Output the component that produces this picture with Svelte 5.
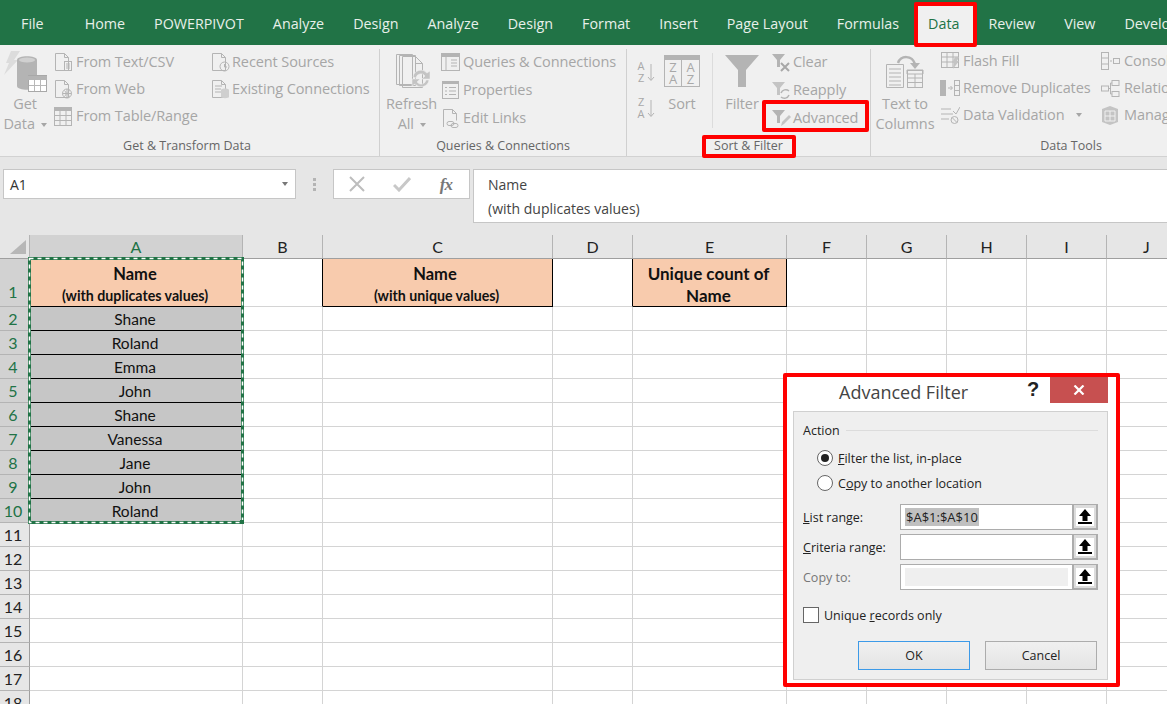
<script>
	const tabs = ['Home', 'POWERPIVOT', 'Analyze', 'Design', 'Analyze', 'Design', 'Format', 'Insert', 'Page Layout', 'Formulas', 'Data', 'Review', 'View', 'Developer'];
	const cols = ['A', 'B', 'C', 'D', 'E', 'F', 'G', 'H', 'I', 'J'];
	const names = ['Shane', 'Roland', 'Emma', 'John', 'Shane', 'Vanessa', 'Jane', 'John', 'Roland'];
	const rows = Array.from({ length: 17 }, (_, i) => i + 2);
</script>

<div class="page">
	<div class="tabs">
		<span class="tab file">File</span>
		{#each tabs as tab}
			<span class="tab" class:active={tab === 'Data'}>{tab}</span>
		{/each}
	</div>

	<div class="ribbon">
		<section class="group g1">
			<div class="body">
				<div class="big w50">
					<svg class="top2" width="46" height="42" viewBox="0 0 46 42">
						<polygon points="9,0 18,0 12,9 16,9 2,24 7,12 4,12" fill="#dcdcdc" />
						<path d="M15 9c0-5 20-5 20 0v26c0 5-20 5-20 0z" fill="#b4b4b4" />
						<ellipse cx="25" cy="9" rx="8" ry="2.5" fill="#d0d0d0" />
						<rect x="26.5" y="24.500" width="18" height="16" fill="#fff" stroke="#a8a8a8" />
						<path d="M26 25h19v4H26z" fill="#b4b4b4" />
						<path d="M32.500 29v11M38.500 29v11M27 34.500h17" stroke="#b8b8b8" fill="none" />
					</svg>
					<span class="big-label">Get<br />Data <i class="caret"></i></span>
				</div>
				<div class="col r27 w158">
					<div class="item"><svg class="ico" width="20" height="20" viewBox="0 0 20 20"><path d="M2.500 1.500h9l4 4v13h-13zM11.500 1.500v4h4" class="ln" /><rect x="11.500" y="9.500" width="7" height="9" fill="#f0f0f0" class="ln" /><path d="M13 12h4M13 14h4M13 16h4" class="ln" /></svg>From Text/CSV</div>
					<div class="item"><svg class="ico" width="20" height="20" viewBox="0 0 20 20"><path d="M2.500 1.500h9l4 4v13h-13zM11.500 1.500v4h4" class="ln" /><circle cx="14" cy="14.500" r="4.500" class="ln" /><path d="M9.500 14.500h9M14 10v9M11.500 11.500c2 2 2 4 0 6M16.500 11.500c-2 2-2 4 0 6" class="ln" /></svg>From Web</div>
					<div class="item"><svg class="ico" width="20" height="20" viewBox="0 0 20 20"><rect x="1.500" y="1.500" width="17" height="18" class="ln" /><path d="M1 1h18v4H1z" fill="#b4b4b4" /><path d="M7 5v14M13 5v14M1.500 9.500h17M1.500 14.500h17" class="ln" /></svg>From Table/Range</div>
				</div>
				<div class="col r27">
					<div class="item tight"><svg class="ico" width="20" height="20" viewBox="0 0 20 20"><path d="M1.500 1.500h9l4 4v13h-13zM10.500 1.500v4h4" class="ln" /><circle cx="13.500" cy="14.500" r="4.500" class="ln" /><path d="M13.500 12v3h2.500" class="ln" /></svg>Recent Sources</div>
					<div class="item tight"><svg class="ico" width="20" height="20" viewBox="0 0 20 20"><path d="M1.500 1.500h9l4 4v13h-13zM10.500 1.500v4h4M4 7h7M4 10h6M4 13h6" class="ln" /><path d="M10 11c0-2 8-2 8 0v7c0 1.500-8 1.500-8 0z" fill="#cfcfcf" /></svg>Existing Connections</div>
				</div>
			</div>
			<div class="label">Get &amp; Transform Data</div>
		</section>

		<section class="group g2">
			<div class="body">
				<div class="big w50">
					<svg class="top4" width="40" height="38" viewBox="0 4 40 38">
						<path d="M4.500 5.500h16v30h-16zM7.500 6.500h16v30h-16zM10.500 7.500h13l7 7v24h-20zM23.500 7.500v7h7" class="ln" />
						<path d="M21 28a8 8 0 0 1 14-4l3-2v8h-8l3-3a5 5 0 0 0-9 2zM37 31a8 8 0 0 1-14 4l-3 2v-7h8l-3 3a5 5 0 0 0 9-2z" fill="#c4c4c4" stroke="#f0f0f0" stroke-width="0.5" />
					</svg>
					<span class="big-label">Refresh<br />All <i class="caret"></i></span>
				</div>
				<div class="col r28">
					<div class="item"><svg class="ico" width="20" height="20" viewBox="0 0 20 20"><rect x="1.500" y="1.500" width="18" height="17" class="ln" /><path d="M1 1h19v4H1z" fill="#b4b4b4" /><path d="M6 5v13M11 8h6M11 11h6M11 14h6" class="ln" /></svg>Queries &amp; Connections</div>
					<div class="item"><svg class="ico" width="20" height="20" viewBox="0 0 20 20"><rect x="2.500" y="1.500" width="16" height="17" class="ln" /><path d="M2 1h17v3H2z" fill="#b4b4b4" /><path d="M9 7.500h7M9 11h7M9 14.500h7M5 7.500h2M5 11h2M5 14.500h2" class="ln" /></svg>Properties</div>
					<div class="item"><svg class="ico" width="20" height="20" viewBox="0 0 20 20"><path d="M3.500 19v-17.500h9l4 4v7M12.500 1.500v4h4" class="ln" /><rect x="7" y="13.500" width="7" height="4" rx="2" class="ln" /><rect x="11" y="15.500" width="7" height="4" rx="2" class="ln" /></svg>Edit Links</div>
				</div>
			</div>
			<div class="label">Queries &amp; Connections</div>
		</section>

		<section class="group g3">
			<div class="body">
				<div class="az-col">
					<svg width="20" height="24" viewBox="0 0 20 24">
						<text x="6" y="10" class="az">A</text><text x="6" y="22" class="az">Z</text>
						<path d="M16 4v16M13 17l3 3.500 3-3.500" class="ln" />
					</svg>
					<svg width="20" height="24" viewBox="0 0 20 24">
						<text x="6" y="10" class="az">Z</text><text x="6" y="22" class="az">A</text>
						<path d="M16 4v16M13 17l3 3.500 3-3.500" class="ln" />
					</svg>
				</div>
				<div class="big sort">
					<svg class="top6" width="36" height="32" viewBox="0 0 36 32">
						<rect x="0.500" y="0.500" width="35" height="31" fill="#f0f0f0" stroke="#b4b4b4" />
						<rect x="0" y="0" width="36" height="5" fill="#b4b4b4" />
						<path d="M17.500 5v26" class="ln" />
						<text x="9" y="17" class="az big-az">Z</text><text x="9" y="29" class="az big-az">A</text>
						<text x="26.500" y="17" class="az big-az">A</text><text x="26.500" y="29" class="az big-az">Z</text>
					</svg>
					<span class="big-label">Sort</span>
				</div>
				<div class="vsep"></div>
				<div class="big filter">
					<svg class="top6" width="34" height="32" viewBox="0 0 34 32">
						<polygon points="0,0 34,0 21,15 21,32 13,32 13,15" fill="#b4b4b4" />
					</svg>
					<span class="big-label">Filter</span>
				</div>
				<div class="col r28">
					<div class="item"><svg class="ico" width="20" height="20" viewBox="0 0 20 20"><polygon points="1,2 14,2 9,8 9,15 6,15 6,8" fill="#b4b4b4" /><path d="M10 11l8 8M18 11l-8 8" stroke="#a8a8a8" stroke-width="2" /></svg>Clear</div>
					<div class="item"><svg class="ico" width="20" height="20" viewBox="0 0 20 20"><polygon points="1,2 14,2 9,8 9,15 6,15 6,8" fill="#c4c4c4" /><path d="M10 13a5 5 0 0 1 8-2M18 15a5 5 0 0 1-8 2" stroke="#b4b4b4" stroke-width="1.500" fill="none" /></svg>Reapply</div>
					<div class="item"><svg class="ico" width="20" height="20" viewBox="0 0 20 20"><polygon points="1,2 14,2 9,8 9,15 6,15 6,8" fill="#b4b4b4" /><path d="M10 18l1-4 7-7 2 2-7 7z" fill="#c4c4c4" /></svg>Advanced</div>
				</div>
			</div>
			<div class="label">Sort &amp; Filter</div>
		</section>

		<section class="group g4">
			<div class="body">
				<div class="big w60">
					<svg class="top6" width="38" height="34" viewBox="0 0 38 34">
						<path d="M0.500 9.500h17v23h-17zM3 14h12M3 18h12M3 22h12M3 26h12M3 30h12" class="ln" />
						<rect x="21.500" y="15.500" width="15" height="17" class="ln" />
						<path d="M21 15h16v4H21zM29 19v13M22 23h14M22 27.500h14" class="ln" />
						<path d="M12 8c3-8 14-8 17 1" stroke="#b4b4b4" stroke-width="2.500" fill="none" />
						<polygon points="24,8 34,8 29,14" fill="#b4b4b4" />
					</svg>
					<span class="big-label">Text to<br />Columns</span>
				</div>
				<div class="col r27 w160">
					<div class="item"><svg class="ico" width="20" height="20" viewBox="0 0 20 20"><rect x="1.500" y="1.500" width="17" height="15" class="ln" /><path d="M1.500 6h17M1.500 11h17M7 1.500v15M13 1.500v15" class="ln" /><polygon points="15,6 19,6 17,10 19,10 13,18 14,12 12,12" fill="#c4c4c4" /></svg>Flash Fill</div>
					<div class="item"><svg class="ico" width="20" height="20" viewBox="0 0 20 20"><rect x="0" y="2" width="6" height="16" fill="#b4b4b4" /><rect x="14.500" y="2.500" width="5" height="15" class="ln" /><path d="M14.500 7.500h5M14.500 12.500h5" class="ln" /><path d="M8 10h4M10.500 8l2 2-2 2" class="ln" /></svg>Remove Duplicates</div>
					<div class="item"><svg class="ico" width="20" height="20" viewBox="0 0 20 20"><path d="M1 4h10M1 9h12M1 14h8" class="ln" /><path d="M13 6l3 3 4-7" class="ln" /><circle cx="14.500" cy="15" r="3.500" class="ln" /><path d="M12 12.500l5 5" class="ln" /></svg>Data Validation <i class="caret far"></i></div>
				</div>
				<div class="col r27">
					<div class="item tight"><svg class="ico" width="20" height="20" viewBox="0 0 20 20"><rect x="1.500" y="1.500" width="7" height="17" class="ln" /><path d="M1.500 7h7M1.500 13h7M10 10h2" class="ln" /><rect x="13.500" y="7.500" width="6" height="5" class="ln" /></svg>Consolidate</div>
					<div class="item tight"><svg class="ico" width="20" height="20" viewBox="0 0 20 20"><rect x="1.500" y="8" width="7" height="5" class="ln" /><rect x="12" y="2.500" width="7" height="5" class="ln" /><rect x="12" y="13.500" width="7" height="5" class="ln" /><path d="M8.500 10.500h2M10.500 5v11h1.500M10.500 5h1.500" class="ln" /></svg>Relationships</div>
					<div class="item tight"><svg class="ico" width="20" height="20" viewBox="0 0 20 20"><path d="M2 4l8-3 8 3v13l-8 3-8-3z" fill="#c4c4c4" /><path d="M5 6h10v10H5zM10 6v10M5 11h10" stroke="#f0f0f0" fill="none" /></svg>Manage Data Model</div>
				</div>
			</div>
			<div class="label">Data Tools</div>
		</section>
	</div>

	<div class="formula">
		<div class="namebox"><span>A1</span><i class="caret dark"></i></div>
		<div class="dots"><b></b><b></b><b></b></div>
		<div class="fxbtns">
			<svg width="16" height="16" viewBox="0 0 16 16"><path d="M1 1l14 14M15 1L1 15" stroke="#bdbdbd" stroke-width="2" /></svg>
			<svg width="18" height="16" viewBox="0 0 18 16"><path d="M1 9l5 5L17 2" stroke="#c8c8c8" stroke-width="3" fill="none" /></svg>
			<span class="fx">fx</span>
		</div>
		<div class="fxinput">Name<br />(with duplicates values)</div>
	</div>

	<div class="sheet">
		<div class="corner"><i></i></div>
		{#each cols as c}
			<div class="colhead" class:sel={c === 'A'}>{c}</div>
		{/each}

		<div class="rowhead tall sel">1</div>
		<div class="cell tall hd hb"><b>Name</b><small>(with duplicates values)</small></div>
		<div class="cell tall br"></div>
		<div class="cell tall hd hb br"><b class="nudge">Name</b><small>(with unique values)</small></div>
		<div class="cell tall br"></div>
		<div class="cell tall hd hb br wide"><b>Unique count of</b><b>Name</b></div>
		{#each [0, 1, 2, 3, 4] as _}<div class="cell tall"></div>{/each}

		{#each rows as r, i}
			<div class="rowhead" class:sel={r <= 10}>{r}</div>
			{#if names[i]}
				<div class="cell val">{names[i]}</div>
			{:else}
				<div class="cell"></div>
			{/if}
			{#each [0, 1, 2, 3, 4, 5, 6, 7, 8] as _}<div class="cell"></div>{/each}
		{/each}
	</div>

	<!-- copy marquee round A1:A10 -->
	<svg class="ants" width="216" height="267" viewBox="0 0 216 267">
		<rect x="1.500" y="1.500" width="213" height="264" fill="none" stroke="#217346" stroke-width="3" />
		<rect x="1.500" y="1.500" width="213" height="264" fill="none" stroke="#fff" stroke-width="1.500" stroke-dasharray="4 4" />
		<rect x="212" y="263" width="4" height="4" fill="#217346" />
	</svg>

	<!-- red annotation boxes -->
	<div class="mark m-adv"></div>
	<div class="mark m-sf"></div>

	<div class="dialog">
		<div class="titlebar">
			<span class="title">Advanced Filter</span>
			<span class="help">?</span>
			<span class="close">
				<svg width="12" height="10" viewBox="0 0 12 10"><path d="M1.500 0.500l9 9M10.500 0.500l-9 9" stroke="#fff" stroke-width="2.200" /></svg>
			</span>
		</div>
		<div class="panel">
			<div class="legend"><span>Action</span><i></i></div>
			<label class="radio first"><i class="dot on"></i><span><u>F</u>ilter the list, in-place</span></label>
			<label class="radio"><i class="dot"></i><span>C<u>o</u>py to another location</span></label>

			<div class="field first">
				<span class="flabel"><u>L</u>ist range:</span>
				<div class="input"><span class="selected">$A$1:$A$10</span></div>
				<div class="pick"><span><svg width="14" height="15" viewBox="0 0 14 15"><path d="M7 0l6 7H9.500v5h-5V7H1zM0 13h14v2H0z" fill="#000" /></svg></span></div>
			</div>
			<div class="field">
				<span class="flabel"><u>C</u>riteria range:</span>
				<div class="input"></div>
				<div class="pick"><span><svg width="14" height="15" viewBox="0 0 14 15"><path d="M7 0l6 7H9.500v5h-5V7H1zM0 13h14v2H0z" fill="#000" /></svg></span></div>
			</div>
			<div class="field">
				<span class="flabel off">Copy to:</span>
				<div class="input dis"><i></i></div>
				<div class="pick"><span><svg width="14" height="15" viewBox="0 0 14 15"><path d="M7 0l6 7H9.500v5h-5V7H1zM0 13h14v2H0z" fill="#000" /></svg></span></div>
			</div>

			<label class="check"><i></i><span>Unique <u>r</u>ecords only</span></label>

			<div class="buttons">
				<button class="primary">OK</button>
				<button>Cancel</button>
			</div>
		</div>
	</div>
</div>

<style>
	:global(body) {
		margin: 0;
		background: #fff;
	}

	.page {
		position: relative;
		width: 1167px;
		height: 704px;
		overflow: hidden;
		font-family: 'Open Sans', 'Liberation Sans', sans-serif;
		font-size: 14px;
		color: #444;
	}

	/* tabs */
	.tabs {
		position: relative;
		z-index: 1;
		height: 45px;
		background: #217346;
		display: flex;
		align-items: center;
		gap: 29px;
		padding-left: 21px;
		white-space: nowrap;
		color: #e8f0ea;
		font-size: 14.300px;
		box-sizing: border-box;
	}
	.tab.file {
		margin-right: 12px;
	}
	.tab {
		position: relative;
		top: 1px;
		flex: none;
	}
	.tab.active {
		color: #217346;
	}
	/* the Data tab with its red annotation box */
	.tab.active::before {
		content: '';
		position: absolute;
		z-index: -1;
		left: -14px;
		right: -18px;
		top: -12px;
		height: 45px;
		box-sizing: border-box;
		background: #f0f0f0;
		border: 4px solid #f00;
		border-radius: 2px;
	}

	/* ribbon */
	.ribbon {
		height: 112px;
		box-sizing: border-box;
		background: #f0f0f0;
		border-bottom: 1px solid #d2d2d2;
		display: flex;
		white-space: nowrap;
		color: #a6a6a6;
		font-size: 14.500px;
		letter-spacing: -0.1px;
	}
	.group {
		display: flex;
		flex-direction: column;
		height: 107px;
		margin-top: 4px;
		box-sizing: border-box;
		border-right: 1px solid #d0d0d0;
	}
	.g1 { width: 380px; }
	.g2 { width: 247px; padding-left: 6px; }
	.g3 { width: 244px; padding-left: 8px; }
	.g4 { flex: 1; border-right: 0; padding-left: 6px; min-width: 0; overflow: hidden; }
	.body {
		flex: 1;
		display: flex;
		min-height: 0;
	}
	.body > * {
		flex: none;
	}
	.label {
		height: 21px;
		line-height: 22px;
		text-align: center;
		font-size: 12.500px;
		color: #666;
		letter-spacing: 0;
	}
	.g1 .label { padding-right: 5px; }
	.g2 .label { margin-left: -6px; }
	.g3 .label { margin-left: -8px; }
	.g4 .label { margin-left: -6px; padding-left: 104px; }
	.big {
		display: grid;
		grid-template-rows: 45px auto;
		justify-items: center;
	}
	.top2 { margin-top: 2px; }
	.top4 { margin-top: 4px; }
	.top6 { margin-top: 6px; }
	.big-label {
		text-align: center;
		line-height: 20px;
	}
	.w50 { width: 50px; margin-right: 3px; }
	.w60 { width: 60px; margin-left: -2px; margin-right: 5px; }
	.w158 { width: 158px; }
	.w160 { width: 160px; }
	.col {
		display: flex;
		flex-direction: column;
		padding-top: 3px;
	}
	.g2 .col { margin-left: 1px; }
	.g4 .col { padding-top: 2px; }
	.r27 { gap: 7px; }
	.r28 { gap: 8px; }
	.item {
		height: 20px;
		line-height: 20px;
		display: flex;
		align-items: center;
	}
	.ico {
		flex: none;
		margin-right: 3px;
	}
	.item.tight .ico {
		margin-right: 1px;
	}
	.g4 .item.tight .ico {
		margin-right: 4px;
	}
	.g3 .item .ico { margin-right: 2px; }
	.ln {
		fill: none;
		stroke: #b4b4b4;
		stroke-width: 1;
	}
	.caret {
		display: inline-block;
		width: 0;
		height: 0;
		border: 3.500px solid transparent;
		border-top: 4px solid #a6a6a6;
		border-bottom: 0;
		vertical-align: middle;
		margin-left: 2px;
	}
	.caret.far { margin-left: 12px; }
	.az-col {
		width: 29px;
		display: flex;
		flex-direction: column;
		gap: 12px;
		padding-top: 11px;
	}
	.az {
		font-size: 11px;
		fill: #a8a8a8;
		text-anchor: middle;
	}
	.big-az {
		font-size: 13px;
	}
	.big.sort { width: 36px; }
	.big.filter { width: 34px; margin-right: 12px; }
	.vsep {
		width: 1px;
		height: 75px;
		margin: 4px 12px 0 12px;
		background: #dcdcdc;
	}

	/* formula bar */
	.formula {
		height: 78px;
		background: #e6e6e6;
		display: flex;
		align-items: flex-start;
		padding: 12px 0 0 3px;
		box-sizing: border-box;
		font-size: 14px;
	}
	.namebox {
		width: 293px;
		height: 30px;
		box-sizing: border-box;
		background: #fff;
		border: 1px solid #c6c6c6;
		display: flex;
		align-items: center;
		justify-content: space-between;
		padding: 0 7px 0 6px;
		color: #333;
	}
	.caret.dark { border-width: 4px 3.500px 0; border-top-color: #777; }
	.dots {
		width: 37px;
		height: 30px;
		display: flex;
		flex-direction: column;
		align-items: center;
		justify-content: center;
		gap: 2px;
	}
	.dots b {
		width: 3px;
		height: 3px;
		background: #b4b4b4;
	}
	.fxbtns {
		width: 137px;
		height: 30px;
		box-sizing: border-box;
		background: #fff;
		border: 1px solid #c6c6c6;
		display: flex;
		align-items: center;
		justify-content: space-between;
		padding: 0 17px 0 15px;
	}
	.fx {
		font-family: 'Liberation Serif', serif;
		font-style: italic;
		font-weight: bold;
		font-size: 17px;
		color: #777;
		line-height: 1;
		letter-spacing: -1px;
	}
	.fxinput {
		flex: 1;
		margin-left: 3px;
		height: 54px;
		box-sizing: border-box;
		background: #fff;
		border: 1px solid #c6c6c6;
		border-right: 0;
		padding: 3px 0 0 14px;
		line-height: 24px;
		color: #444;
	}

	/* sheet */
	.sheet {
		display: grid;
		grid-template-columns: 30px 213px 80px 230px 80px 154px 80px 80px 80px 80px 80px;
		grid-auto-rows: 24px;
		font-family: Lato, 'Liberation Sans', sans-serif;
		font-size: 15.500px;
		color: #111;
	}
	.corner {
		background: #e6e6e6;
		border-right: 1px solid #b4b4b4;
		border-bottom: 1px solid #9f9f9f;
		position: relative;
	}
	.corner i {
		position: absolute;
		left: 10px;
		top: 5px;
		width: 0;
		height: 0;
		border-left: 16px solid transparent;
		border-bottom: 14px solid #b7b7b7;
	}
	.colhead {
		background: #e6e6e6;
		border-right: 1px solid #b4b4b4;
		border-bottom: 1px solid #9f9f9f;
		text-align: center;
		line-height: 24px;
		font-size: 16px;
		color: #222;
	}
	.colhead.sel {
		background: #d2d2d2;
		color: #217346;
	}
	.rowhead {
		background: #e6e6e6;
		border-right: 1px solid #9f9f9f;
		border-bottom: 1px solid #b4b4b4;
		padding-right: 3px;
		text-align: center;
		line-height: 24px;
		font-size: 16px;
		color: #222;
	}
	.rowhead.sel {
		background: #d2d2d2;
		color: #217346;
	}
	.rowhead.tall {
		grid-row: span 2;
		line-height: 30px;
		padding-top: 18px;
		height: 48px;
		box-sizing: border-box;
	}
	.cell {
		box-sizing: border-box;
		border-right: 1px solid #d4d4d4;
		border-bottom: 1px solid #d4d4d4;
		text-align: center;
		line-height: 25px;
		padding-right: 2px;
	}
	.cell.tall {
		height: 48px;
		grid-row: span 2;
	}
	.cell.br {
		border-right-color: #000;
	}
	.cell.hd {
		background: #f8cbad;
		display: flex;
		flex-direction: column;
		align-items: center;
		line-height: 22px;
		padding-top: 4px;
	}
	.cell.hb {
		border-bottom-color: #000;
	}
	.cell.hd b {
		font-size: 16.500px;
	}
	.cell.hd b.nudge {
		margin-left: -3px;
	}
	.cell.hd.wide {
		padding-right: 2px;
	}
	.cell.hd.wide b {
		font-size: 17px;
	}
	.cell.hd small {
		font-size: 14.200px;
		font-weight: bold;
	}
	.cell.val {
		background: #c6c6c6;
		border-bottom-color: #000;
	}
	.ants {
		position: absolute;
		left: 28px;
		top: 257px;
	}

	/* red boxes */
	.mark {
		position: absolute;
		box-sizing: border-box;
		border: 4px solid #f00;
		border-radius: 2px;
	}
	.m-adv {
		left: 762px;
		top: 100px;
		width: 107px;
		height: 32px;
	}
	.m-sf {
		left: 702px;
		top: 135px;
		width: 94px;
		height: 23px;
	}

	/* dialog */
	.dialog {
		position: absolute;
		left: 783px;
		top: 373px;
		width: 337px;
		height: 314px;
		box-sizing: border-box;
		border: 4px solid #f00;
		border-radius: 2px;
		background: #fff;
		padding: 0 8px 0 6px;
		font-size: 12.500px;
		color: #222;
		white-space: nowrap;
	}
	.titlebar {
		height: 34px;
		display: flex;
		align-items: flex-start;
	}
	.title {
		font-size: 18px;
		color: #444;
		margin: 3px 0 0 46px;
	}
	.help {
		margin: -3px 0 0 auto;
		font-size: 20px;
		font-weight: bold;
		color: #222;
		font-family: 'Liberation Sans', sans-serif;
		line-height: 30px;
		width: 23px;
	}
	.close {
		width: 58px;
		height: 26px;
		background: #c75050;
		display: flex;
		align-items: center;
		justify-content: center;
	}
	.panel {
		height: 269px;
		box-sizing: border-box;
		background: #efefef;
		border: 1px solid #d0d0d0;
		padding: 8px 9px 0;
	}
	.legend {
		display: flex;
		align-items: center;
		height: 20px;
		gap: 6px;
	}
	.legend i {
		flex: 1;
		height: 1px;
		background: #dcdcdc;
	}
	.radio {
		display: flex;
		align-items: center;
		gap: 5px;
		height: 18px;
		margin: 7px 0 0 14px;
	}
	.radio.first {
		margin-top: 9px;
	}
	.dot {
		width: 14px;
		height: 14px;
		border: 1px solid #666;
		border-radius: 50%;
		background: #fff;
		display: flex;
		align-items: center;
		justify-content: center;
	}
	.dot.on::after {
		content: '';
		width: 8px;
		height: 8px;
		border-radius: 50%;
		background: #222;
	}
	.field {
		display: flex;
		align-items: center;
		height: 26px;
		margin-top: 4px;
	}
	.field.first {
		margin-top: 12px;
	}
	.flabel {
		width: 97px;
	}
	.flabel.off {
		color: #777;
	}
	.input {
		width: 172px;
		height: 26px;
		box-sizing: border-box;
		background: #fff;
		border: 1px solid #acacac;
		border-right: 0;
		padding: 3px 0 0 4px;
		font-size: 13px;
	}
	.selected {
		background: #c0c0c0;
		padding: 0 1px;
	}
	.input.dis {
		padding: 3px 4px;
	}
	.input.dis i {
		display: block;
		height: 100%;
		background: #efefef;
	}
	.pick {
		width: 26px;
		height: 26px;
		box-sizing: border-box;
		border: 1px solid #acacac;
		border-width: 1px 2px 2px 2px;
		background: #dcdcdc;
		display: flex;
		align-items: center;
		justify-content: center;
	}
	.pick span {
		width: 18px;
		height: 18px;
		background: #fff;
		display: flex;
		align-items: center;
		justify-content: center;
	}
	.check {
		display: flex;
		align-items: center;
		gap: 5px;
		margin-top: 16px;
		height: 18px;
	}
	.check i {
		width: 16px;
		height: 16px;
		box-sizing: border-box;
		border: 1px solid #666;
		background: #fff;
	}
	.buttons {
		display: flex;
		gap: 15px;
		margin: 17px 0 0 55px;
	}
	button {
		width: 112px;
		height: 29px;
		box-sizing: border-box;
		border: 1px solid #acacac;
		background: linear-gradient(#f0f0f0, #e4e4e4);
		font: inherit;
		color: #222;
		padding: 0;
	}
	button.primary {
		border-color: #3c9ae8;
	}
</style>
